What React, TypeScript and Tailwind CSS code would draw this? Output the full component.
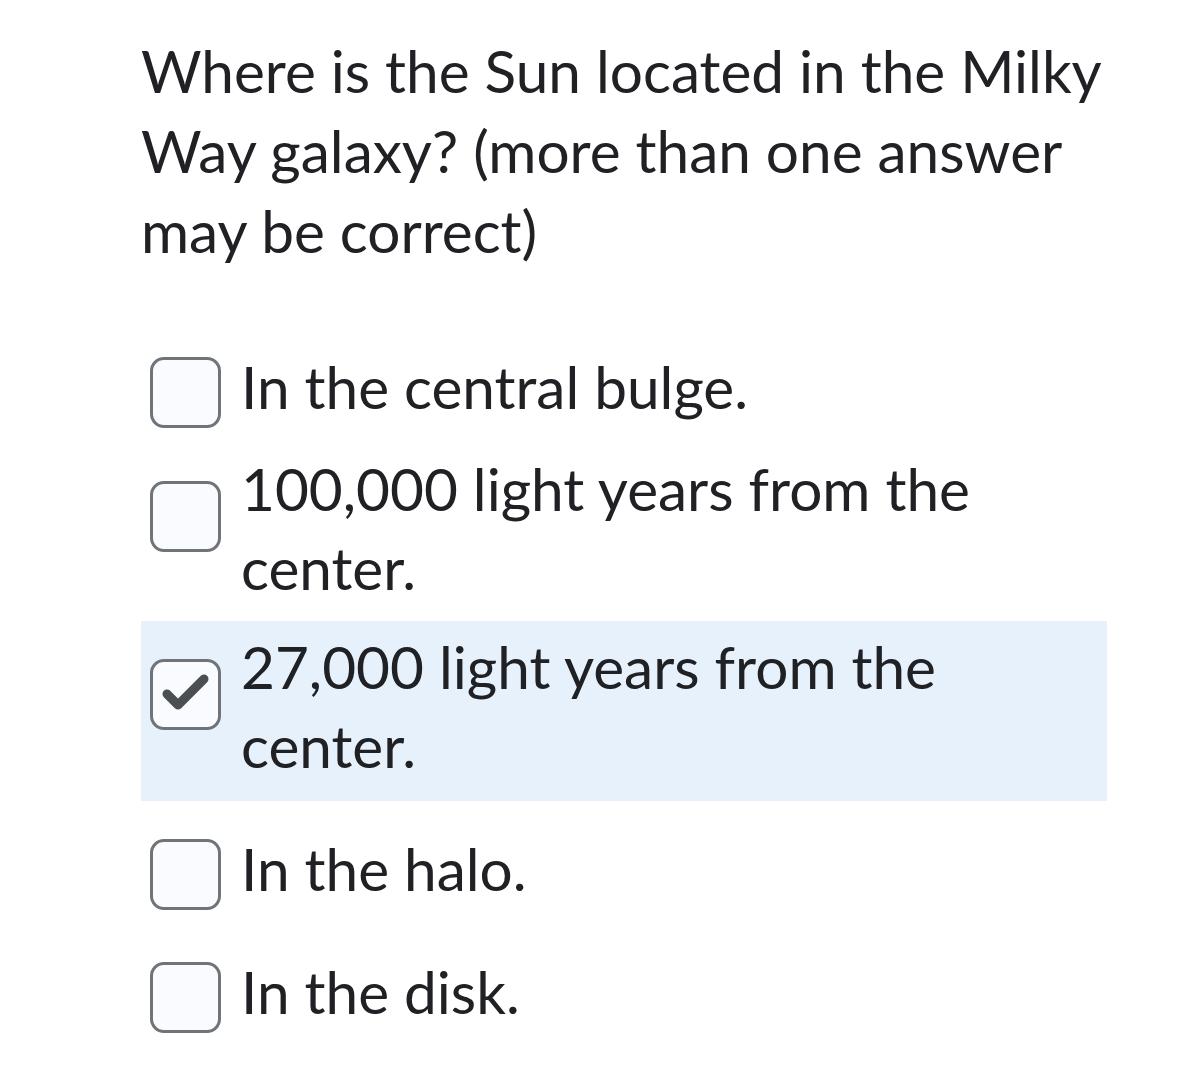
const OPTIONS: { label: string; checked: boolean; multi: boolean }[] = [
  { label: "In the central bulge.", checked: false, multi: false },
  { label: "100,000 light years from the center.", checked: false, multi: true },
  { label: "27,000 light years from the center.", checked: true, multi: true },
  { label: "In the halo.", checked: false, multi: false },
  { label: "In the disk.", checked: false, multi: false },
];

function Checkbox({ checked }: { checked: boolean }) {
  return (
    <span className="flex h-[71px] w-[71px] shrink-0 items-center justify-center rounded-[14px] border-[3px] border-[#6f7478] bg-[#f9fbff]">
      {checked && (
        <svg width="71" height="71" viewBox="0 0 71 71" className="-m-[3px]">
          <path
            d="M17 35 L28 46 L54 20"
            fill="none"
            stroke="#4a4f53"
            strokeWidth="9"
            strokeLinecap="round"
            strokeLinejoin="round"
          />
        </svg>
      )}
    </span>
  );
}

const ROW_MARGIN = ["mt-[77px]", "mt-[21px]", "mt-[14px]", "mt-[28px]", "mt-[42px]"];

export default function App() {
  return (
    <div className="min-h-[1084px] bg-white font-['Lato',sans-serif] text-[58.5px] leading-[79px] text-[#202124]">
      <div className="ml-[141px] w-[966px] pt-[30px]">
        <p className="pr-[6px] leading-[80px]">
          Where is the Sun located in the Milky Way galaxy? (more than one answer may be correct)
        </p>

        <div className="flex flex-col">
          {OPTIONS.map((opt, i) => (
            <label
              key={opt.label}
              className={`flex items-start gap-[20px] pl-[9px] ${ROW_MARGIN[i]} ${
                opt.checked ? "bg-[#e7f1fc] pt-[6px] pb-[16px]" : ""
              }`}
            >
              <span className={opt.multi ? "mt-[32px]" : "mt-[10px]"}>
                <Checkbox checked={opt.checked} />
              </span>
              <span className="pr-[130px]">{opt.label}</span>
            </label>
          ))}
        </div>
      </div>
    </div>
  );
}
